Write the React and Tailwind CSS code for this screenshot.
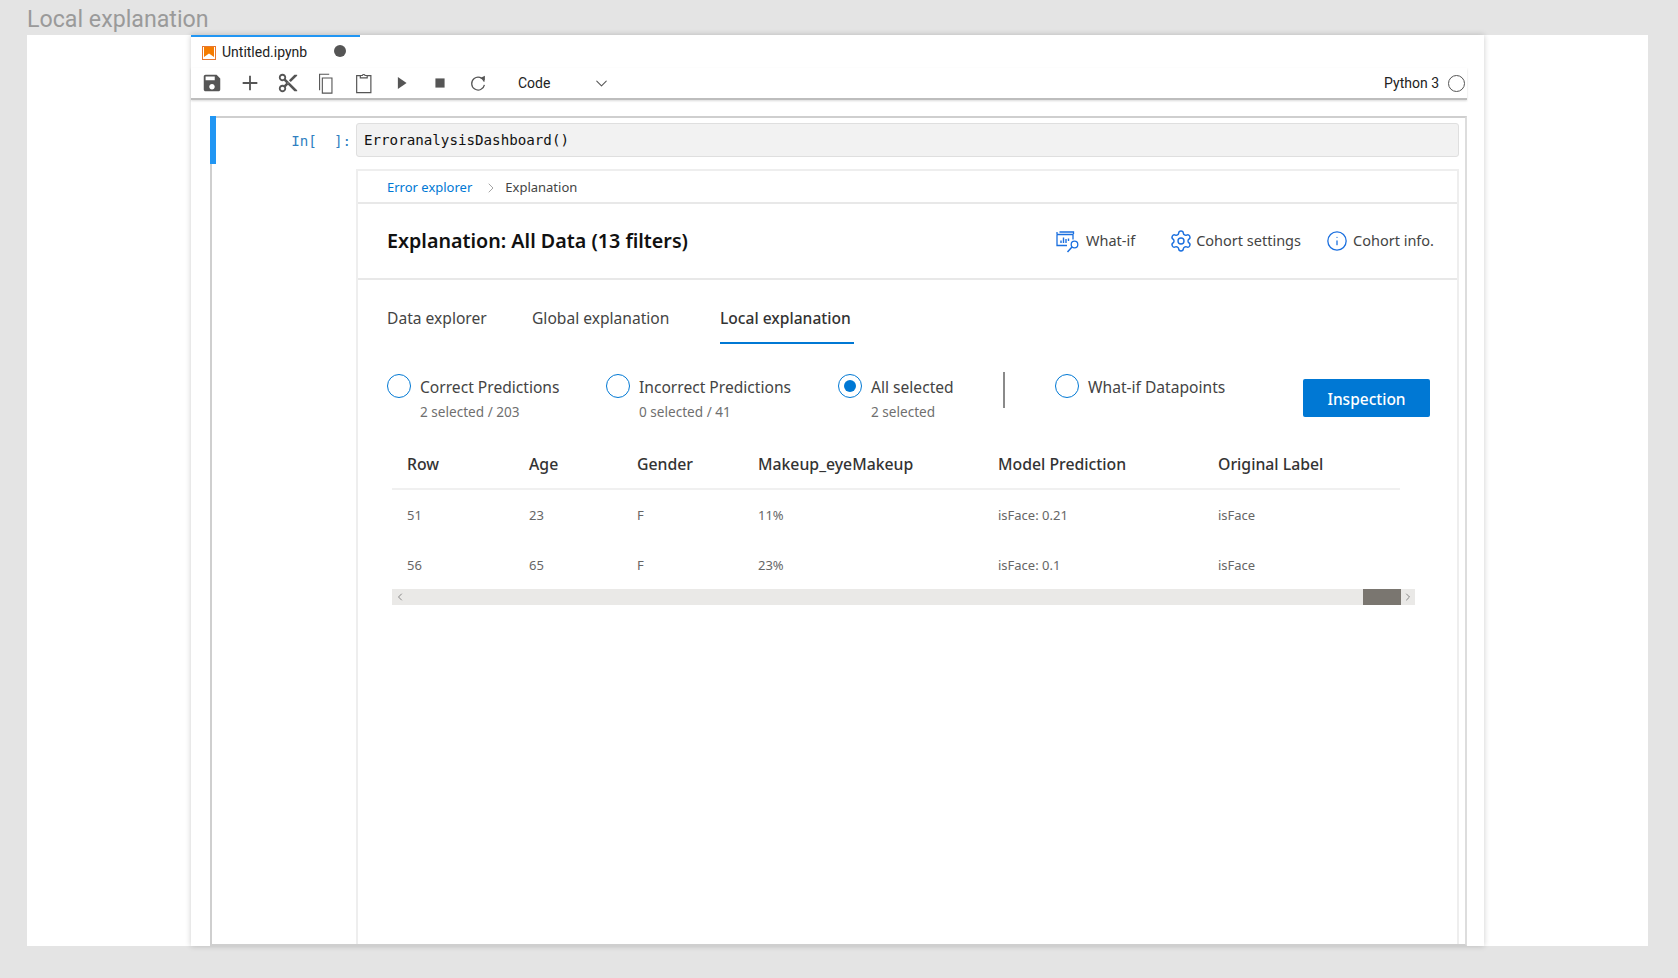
import { Settings, Info, ChevronDown, ChevronRight, ChevronLeft } from "lucide-react";

const uiFont = { fontFamily: '"Noto Sans", sans-serif' };

const ToolIcon = ({ children }) => (
    <div className="w-[38px] h-[24px] flex items-center justify-center text-[#555]">
        <svg width="22" height="22" viewBox="0 0 24 24" fill="currentColor">{children}</svg>
    </div>
);

const NotebookToolbar = () => (
    <div className="h-[32px] flex items-center pl-[2px] border-b-2 border-[#bdbdbd] mr-[17px] shadow-[0_1px_2px_rgba(0,0,0,0.15)]">
        <ToolIcon><path d="M17 3H5c-1.11 0-2 .9-2 2v14c0 1.1.89 2 2 2h14c1.1 0 2-.9 2-2V7l-4-4zm-5 16c-1.66 0-3-1.34-3-3s1.34-3 3-3 3 1.34 3 3-1.34 3-3 3zm3-10H5V5h10v4z" /></ToolIcon>
        <ToolIcon><path d="M20 13h-7v7h-2v-7H4v-2h7V4h2v7h7v2z" /></ToolIcon>
        <ToolIcon><path d="M9.64 7.64c.23-.5.36-1.05.36-1.64 0-2.21-1.79-4-4-4S2 3.79 2 6s1.79 4 4 4c.59 0 1.14-.13 1.64-.36L10 12l-2.36 2.36C7.14 14.13 6.59 14 6 14c-2.21 0-4 1.79-4 4s1.79 4 4 4 4-1.79 4-4c0-.59-.13-1.14-.36-1.64L12 14l7 7h3v-1L9.64 7.64zM6 8c-1.1 0-2-.89-2-2s.9-2 2-2 2 .89 2 2-.9 2-2 2zm0 12c-1.1 0-2-.89-2-2s.9-2 2-2 2 .89 2 2-.9 2-2 2zm6-7.5c-.28 0-.5-.22-.5-.5s.22-.5.5-.5.5.22.5.5-.22.5-.5.5zM19 3l-6 6 2 2 7-7V3z" /></ToolIcon>
        <ToolIcon>
            <path fill="none" stroke="currentColor" strokeWidth="1.2" d="M8 6.5h10.5V23H8z" />
            <path fill="none" stroke="currentColor" strokeWidth="1.2" d="M5 20V2.5h10.5" />
        </ToolIcon>
        <ToolIcon>
            <path fill="none" stroke="currentColor" strokeWidth="1.3" d="M8 4H4v18.5h15.5V4h-4" />
            <path fill="none" stroke="currentColor" strokeWidth="1.3" d="M8 6.5V3.8h2.2a1.6 1.6 0 0 1 3 0h2.3v2.7z" />
        </ToolIcon>
        <ToolIcon><path d="M7.5 5.5v13l9.5-6.5z" /></ToolIcon>
        <ToolIcon><path d="M7 7h10v10H7z" /></ToolIcon>
        <ToolIcon>
            <path fill="none" stroke="currentColor" strokeWidth="1.4" d="M18.8 10.5A7 7 0 1 0 19 14" />
            <path d="M14.5 6.5l5 -2.5v5.5z" />
        </ToolIcon>
        <span className="ml-[21px] text-[14px] text-[#222]" style={{ fontFamily: '"Roboto", sans-serif' }}>Code</span>
        <ChevronDown className="ml-[42px] text-[#555]" size={19} strokeWidth={1.3} />
        <span className="ml-auto text-[14px] text-[#222]" style={{ fontFamily: '"Roboto", sans-serif' }}>Python 3</span>
        <div className="ml-[9px] mr-[2px] w-[17px] h-[17px] rounded-full border border-[#555]" />
    </div>
);

const WhatIfIcon = () => (
    <svg width="24" height="24" viewBox="0 0 24 24" fill="none" stroke="#1a6fdf" strokeWidth="1.3">
        <path d="M3.5 3h14v2" />
        <path d="M1 5.5h16v5M1 5.5v11h10" />
        <path d="M1 3v2.5" />
        <path d="M5 14v-2.5M7.5 14V8.5M10 14v-4M12.5 12V9.5" strokeWidth="1.4" />
        <circle cx="18.5" cy="15.5" r="3.3" />
        <path d="M16 18l-4.5 5" strokeWidth="1.5" />
    </svg>
);

const Radio = ({ checked }) => (
    <div className="w-[24px] h-[24px] rounded-full border-[1.5px] border-[#0078d4] flex items-center justify-center shrink-0">
        {checked && <div className="w-[12px] h-[12px] rounded-full bg-[#0078d4]" />}
    </div>
);

const RadioOption = ({ label, sub, checked, className }) => (
    <div className={`flex gap-[9px] ${className}`}>
        <Radio checked={checked} />
        <div className="pt-[2px]">
            <div className="text-[15.6px] leading-[22px] text-[#444] whitespace-nowrap">{label}</div>
            {sub && <div className="mt-[4px] text-[13.6px] leading-[20px] text-[#6f6f6f] whitespace-nowrap">{sub}</div>}
        </div>
    </div>
);

const columns = [
    { header: "Row", width: "w-[137px]", pad: "pl-[15px]" },
    { header: "Age", width: "w-[108px]", pad: "" },
    { header: "Gender", width: "w-[121px]", pad: "" },
    { header: "Makeup_eyeMakeup", width: "w-[240px]", pad: "" },
    { header: "Model Prediction", width: "w-[220px]", pad: "" },
    { header: "Original Label", width: "w-[182px]", pad: "" },
];

const rows = [
    ["51", "23", "F", "11%", "isFace: 0.21", "isFace"],
    ["56", "65", "F", "23%", "isFace: 0.1", "isFace"],
];

const DataTable = () => (
    <div className="ml-[34px] mt-[19px] w-[1023px]">
        <div className="w-[1008px] h-[49px] flex items-center border-b-2 border-[#f0f0f0]">
            {columns.map((col) => (
                <div key={col.header} className={`${col.width} ${col.pad} text-[15.8px] font-medium text-[#333] whitespace-nowrap`}>
                    {col.header}
                </div>
            ))}
        </div>
        {rows.map((row) => (
            <div key={row[0]} className="w-[1008px] h-[50px] pt-[2px] flex items-center">
                {row.map((cell, idx) => (
                    <div key={idx} className={`${columns[idx].width} ${columns[idx].pad} text-[13px] text-[#666] whitespace-nowrap`}>
                        {cell}
                    </div>
                ))}
            </div>
        ))}
        <div className="mt-[-1px] h-[16px] bg-[#eae9e7] flex items-center justify-between">
            <ChevronLeft className="ml-[2px] text-[#666]" size={12} strokeWidth={1.5} />
            <div className="flex items-center">
                <div className="w-[38px] h-[16px] bg-[#7a7670]" />
                <ChevronRight className="mx-[1px] text-[#666]" size={12} strokeWidth={1.5} />
            </div>
        </div>
    </div>
);

const Dashboard = () => (
    <div className="mt-[12px] flex-1 border-x-2 border-t-2 border-[#eeeeee]" style={uiFont}>
        <div className="h-[33px] pt-[2px] flex items-center pl-[29px] border-b-2 border-[#e8e8e8] text-[13px]">
            <span className="text-[#0078d4]">Error explorer</span>
            <ChevronRight className="ml-[11px] mr-[6px] text-[#777]" size={16} strokeWidth={1} />
            <span className="text-[#444]">Explanation</span>
        </div>
        <div className="h-[76px] pb-[1px] flex items-center pl-[29px] pr-[23px] border-b-2 border-[#e8e8e8]">
            <h1 className="text-[19.7px] font-semibold text-[#111]">Explanation: All Data (13 filters)</h1>
            <div className="ml-auto pt-[1px] flex items-center text-[14.5px] text-[#444]">
                <WhatIfIcon />
                <span className="ml-[6px]">What-if</span>
                <Settings className="ml-[34px] text-[#1a6fdf]" size={24} strokeWidth={1.4} />
                <span className="ml-[3px]">Cohort settings</span>
                <Info className="ml-[25px] text-[#1a6fdf]" size={22} strokeWidth={1.4} />
                <span className="ml-[5px]">Cohort info.</span>
            </div>
        </div>
        <div className="h-[64px] flex pl-[29px] text-[15.6px] text-[#444]">
            <div className="w-[145px] pt-[27px]">Data explorer</div>
            <div className="w-[188px] pt-[27px]">Global explanation</div>
            <div className="w-[134px] pt-[27px] font-medium text-[#333] border-b-2 border-[#0078d4] whitespace-nowrap">Local explanation</div>
        </div>
        <div className="mt-[30px] flex items-start pl-[29px] pr-[27px]">
            <RadioOption className="w-[219px]" label="Correct Predictions" sub="2 selected / 203" />
            <RadioOption className="w-[232px]" label="Incorrect Predictions" sub="0 selected / 41" />
            <RadioOption className="w-[165px]" label="All selected" sub="2 selected" checked />
            <div className="w-[2px] h-[36px] mt-[-2px] bg-[#8a8a8a]" />
            <RadioOption className="ml-[50px]" label="What-if Datapoints" />
            <button className="ml-auto mt-[5px] w-[127px] h-[38px] pt-[3px] rounded-[2px] bg-[#0078d4] text-white text-[15.5px] font-medium">Inspection</button>
        </div>
        <DataTable />
    </div>
);

const App = () => (
    <div className="h-[978px] overflow-hidden bg-[#e4e4e4] flex flex-col" style={{ fontFamily: '"Roboto", sans-serif' }}>
        <div className="h-[35px] pl-[27px] text-[23.2px] leading-[39px] text-[#9a9a9a]">Local explanation</div>
        <div className="ml-[27px] w-[1621px] h-[911px] bg-white pl-[164px]">
            <div className="w-[1293px] h-full flex flex-col shadow-[0_0_6px_rgba(0,0,0,0.2)]">
                <div className="w-[169px] h-[33px] border-t-2 border-[#2196f3] flex items-center pl-[11px]">
                    <div className="w-[14px] h-[14px] border border-[#e8772e] flex items-start justify-center">
                        <svg width="10" height="10" viewBox="0 0 10 10"><path d="M0 0h10v10L5 6.5 0 10z" fill="#f57c00" /></svg>
                    </div>
                    <span className="ml-[6px] text-[14px] text-[#222]">Untitled.ipynb</span>
                    <div className="ml-[27px] mb-[3px] w-[12px] h-[12px] rounded-full bg-[#555]" />
                </div>
                <NotebookToolbar />
                <div className="relative ml-[19px] mr-[17px] mt-[16px] flex-1 flex border-2 border-[#cfcfcf] border-r-[#dddddd]">
                    <div className="absolute left-[-2px] top-[-2px] w-[6px] h-[48px] bg-[#2196f3]" />
                    <div className="w-[144px] pt-[11px] pr-[5px] text-right text-[14.2px] leading-[24px] text-[#307fc1]" style={{ fontFamily: '"DejaVu Sans Mono", monospace' }}>
                        <span className="whitespace-pre">In[  ]:</span>
                    </div>
                    <div className="flex-1 flex flex-col pt-[5px] pr-[6px]">
                        <div className="h-[34px] pt-[2px] rounded-[3px] border border-[#dfdfdf] bg-[#f2f2f2] pl-[7px] flex items-center text-[14.2px] text-[#111]" style={{ fontFamily: '"DejaVu Sans Mono", monospace' }}>
                            ErroranalysisDashboard()
                        </div>
                        <Dashboard />
                    </div>
                </div>
            </div>
        </div>
    </div>
);

export default App;
